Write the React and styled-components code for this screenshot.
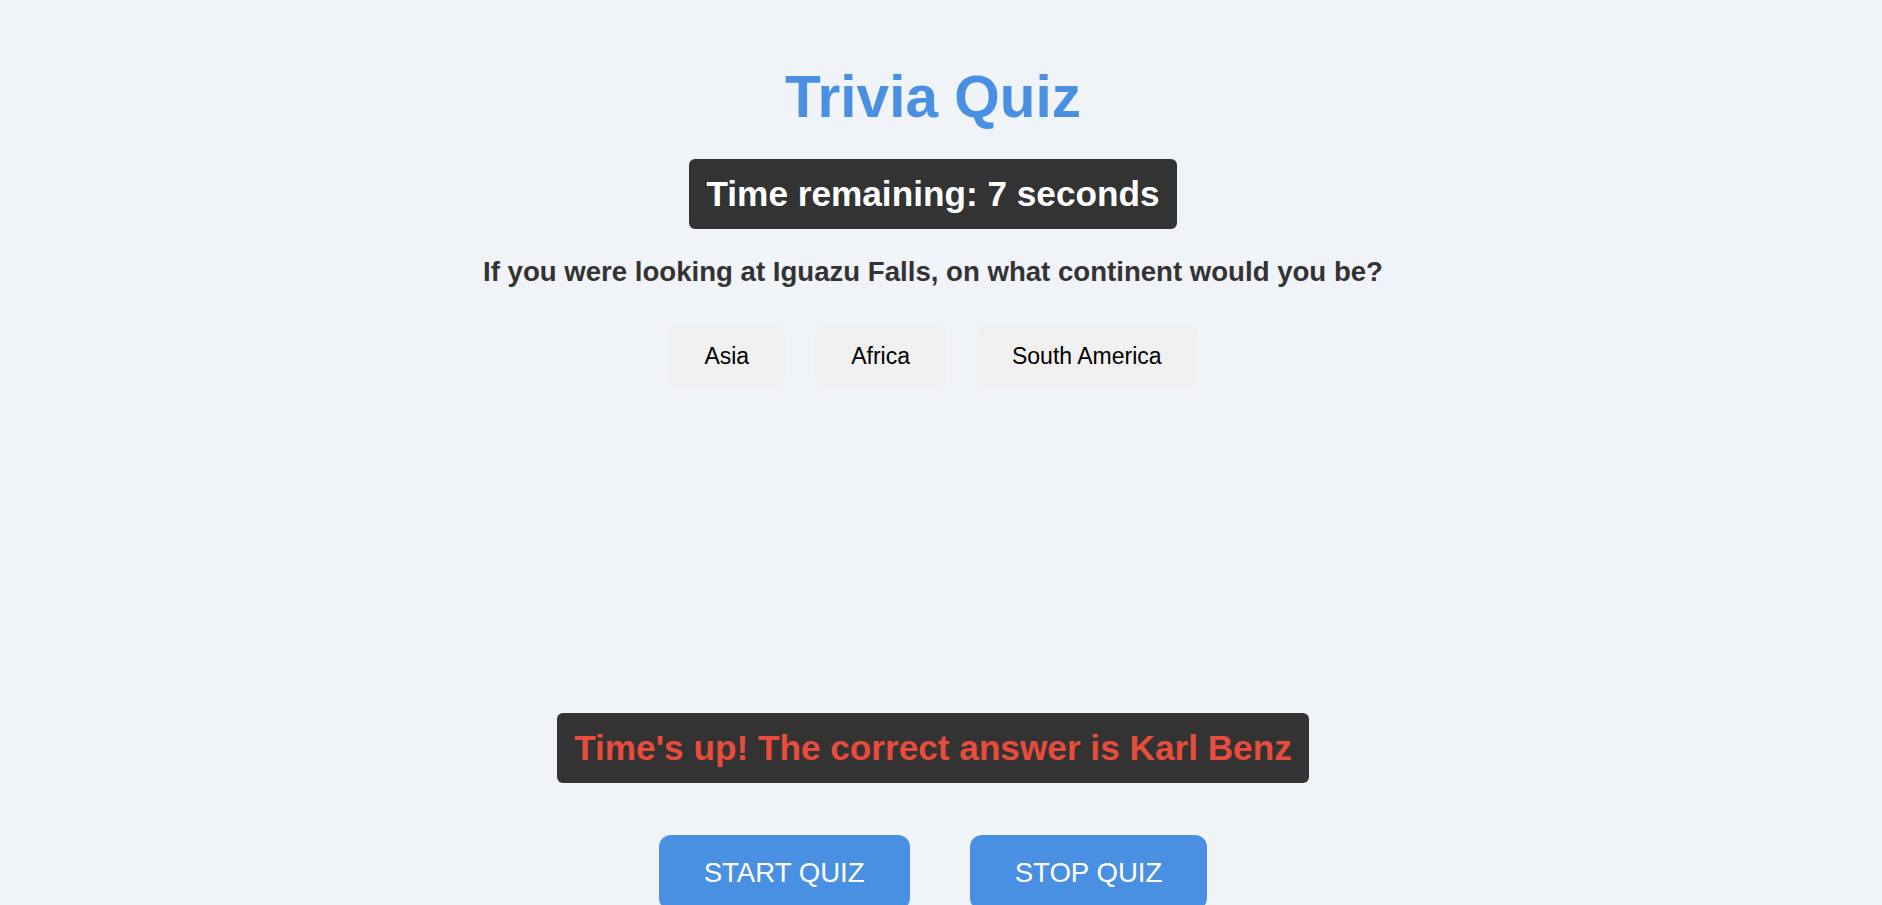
import React from "react";
import styled, { createGlobalStyle } from "styled-components";

const GlobalStyle = createGlobalStyle`
  html, body {
    margin: 0;
    padding: 0;
    overflow: hidden;
    background: #f0f4f8;
  }
  body {
    font-family: "Liberation Sans", Arial, sans-serif;
  }
`;

const Page = styled.main`
  display: flex;
  flex-direction: column;
  align-items: center;
  min-height: 905px;
  padding: 63px 16px 0 0;
  box-sizing: border-box;
  text-align: center;
`;

const Title = styled.h1`
  margin: 0;
  font-size: 58.5px;
  font-weight: 700;
  line-height: normal;
  color: #4a90e2;
`;

const Banner = styled.div`
  margin-top: ${(p) => p.$top}px;
  padding: 15px 17px;
  background: #333333;
  border-radius: 6px;
  font-size: 35.2px;
  font-weight: 700;
  line-height: normal;
  color: ${(p) => p.$color};
`;

const Question = styled.h2`
  margin: 27px 0 0;
  font-size: 27.6px;
  font-weight: 700;
  line-height: normal;
  color: #333333;
`;

const Answers = styled.div`
  display: flex;
  justify-content: center;
  gap: 30px;
  margin-top: 37px;
`;

const AnswerButton = styled.button`
  padding: 18px 36px;
  border: none;
  border-radius: 10px;
  background: #f0f0f0;
  font-family: inherit;
  font-size: 23px;
  line-height: normal;
  color: #000;
  cursor: pointer;
`;

const Controls = styled.div`
  display: flex;
  justify-content: center;
  gap: 60px;
  margin-top: 52px;
`;

const ControlButton = styled.button`
  padding: 21.5px 45px;
  border: none;
  border-radius: 12px;
  background: #4a90e2;
  font-family: inherit;
  font-size: 27.6px;
  line-height: normal;
  color: #ffffff;
  cursor: pointer;
`;

const answers = ["Asia", "Africa", "South America"];

export default function App() {
  return (
    <>
      <GlobalStyle />
      <Page>
        <Title>Trivia Quiz</Title>
        <Banner $top={29} $color="#ffffff">
          Time remaining: 7 seconds
        </Banner>
        <Question>
          If you were looking at Iguazu Falls, on what continent would you be?
        </Question>
        <Answers>
          {answers.map((a) => (
            <AnswerButton key={a}>{a}</AnswerButton>
          ))}
        </Answers>
        <Banner $top={325} $color="#e74c3c">
          Time's up! The correct answer is Karl Benz
        </Banner>
        <Controls>
          <ControlButton>START QUIZ</ControlButton>
          <ControlButton>STOP QUIZ</ControlButton>
        </Controls>
      </Page>
    </>
  );
}
